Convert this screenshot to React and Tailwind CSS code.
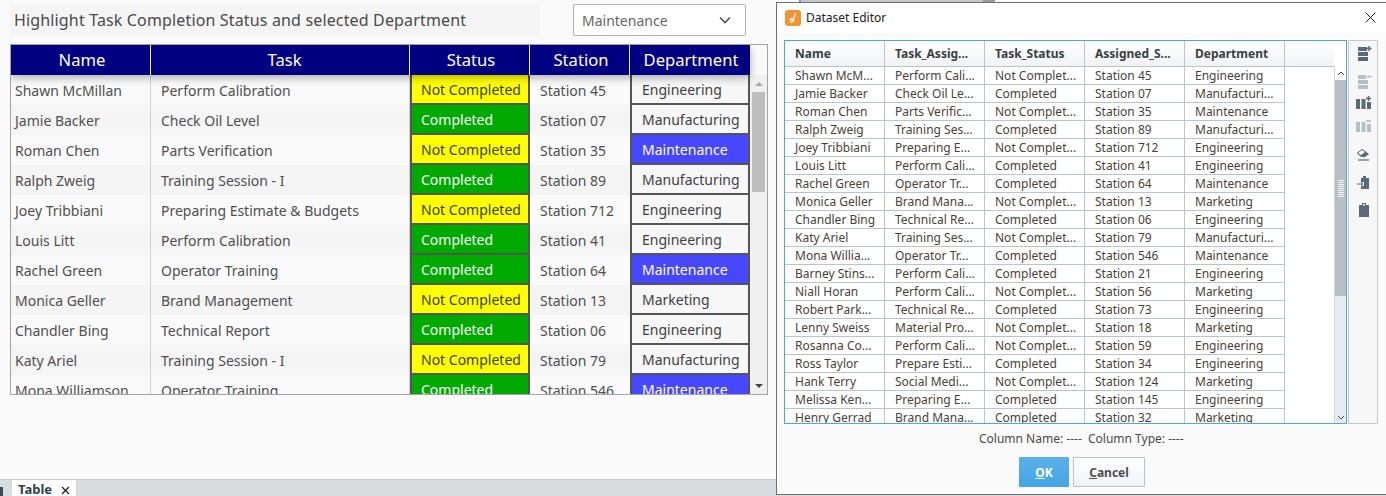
const rows = [
  ["Shawn McMillan","Perform Calibration",0,"Station 45","Engineering"],
  ["Jamie Backer","Check Oil Level",1,"Station 07","Manufacturing"],
  ["Roman Chen","Parts Verification",0,"Station 35","Maintenance"],
  ["Ralph Zweig","Training Session - I",1,"Station 89","Manufacturing"],
  ["Joey Tribbiani","Preparing Estimate & Budgets",0,"Station 712","Engineering"],
  ["Louis Litt","Perform Calibration",1,"Station 41","Engineering"],
  ["Rachel Green","Operator Training",1,"Station 64","Maintenance"],
  ["Monica Geller","Brand Management",0,"Station 13","Marketing"],
  ["Chandler Bing","Technical Report",1,"Station 06","Engineering"],
  ["Katy Ariel","Training Session - I",0,"Station 79","Manufacturing"],
  ["Mona Williamson","Operator Training",1,"Station 546","Maintenance"],
];
const ds = [
  ["Shawn McM...","Perform Cali...","Not Complet...","Station 45","Engineering"],
  ["Jamie Backer","Check Oil Le...","Completed","Station 07","Manufacturi..."],
  ["Roman Chen","Parts Verific...","Not Complet...","Station 35","Maintenance"],
  ["Ralph Zweig","Training Ses...","Completed","Station 89","Manufacturi..."],
  ["Joey Tribbiani","Preparing E...","Not Complet...","Station 712","Engineering"],
  ["Louis Litt","Perform Cali...","Completed","Station 41","Engineering"],
  ["Rachel Green","Operator Tr...","Completed","Station 64","Maintenance"],
  ["Monica Geller","Brand Mana...","Not Complet...","Station 13","Marketing"],
  ["Chandler Bing","Technical Re...","Completed","Station 06","Engineering"],
  ["Katy Ariel","Training Ses...","Not Complet...","Station 79","Manufacturi..."],
  ["Mona Willia...","Operator Tr...","Completed","Station 546","Maintenance"],
  ["Barney Stins...","Perform Cali...","Completed","Station 21","Engineering"],
  ["Niall Horan","Perform Cali...","Not Complet...","Station 56","Marketing"],
  ["Robert Park...","Technical Re...","Completed","Station 73","Engineering"],
  ["Lenny Sweiss","Material Pro...","Not Complet...","Station 18","Marketing"],
  ["Rosanna Co...","Perform Cali...","Not Complet...","Station 59","Engineering"],
  ["Ross Taylor","Prepare Esti...","Completed","Station 34","Engineering"],
  ["Hank Terry","Social Medi...","Not Complet...","Station 124","Marketing"],
  ["Melissa Ken...","Preparing E...","Completed","Station 145","Engineering"],
  ["Henry Gerrad","Brand Mana...","Completed","Station 32","Marketing"],
];
const heads = ["Name","Task_Assig...","Task_Status","Assigned_S...","Department"];

function Tool({ children, className }) {
  return <svg width="16" height="16" viewBox="0 0 16 16" className={`block ml-[2px] shrink-0 ${className}`}>{children}</svg>;
}

function MainTable() {
  return (
    <div className="mx-[10px] mt-2 h-[351px] w-[758px] border border-[#a3a3a3] flex overflow-hidden bg-[#fafafa]">
      <div className="w-[739px] flex flex-col shrink-0">
        <div className="flex h-[30px] shrink-0 bg-[#000080] text-white text-[16.6px] shadow-[0_3px_8px_rgba(0,0,0,0.3)] relative z-10">
          <div className="w-[140px] pl-[3px] flex items-center justify-center border-r border-[#f0f0f0]">Name</div>
          <div className="w-[259px] pl-[9px] flex items-center justify-center border-r border-[#f0f0f0]">Task</div>
          <div className="w-[120px] pl-[3px] flex items-center justify-center border-r border-[#f0f0f0]">Status</div>
          <div className="w-[100px] pl-[3px] flex items-center justify-center border-r border-[#f0f0f0]">Station</div>
          <div className="w-[119px] pl-[3px] flex items-center justify-center">Department</div>
        </div>
        {rows.map((r, i) => (
          <div key={r[0]} className={`flex h-[30px] shrink-0 text-[14px] text-[#4f4f4f] ${i % 2 ? "bg-[#f5f5f5]" : "bg-[#fafafa]"}`}>
            <div className="w-[140px] pl-1 flex items-center border-r border-[#d0d0d0] whitespace-nowrap">{r[0]}</div>
            <div className="w-[259px] pl-[10px] flex items-center border-r border-[#d0d0d0] whitespace-nowrap">{r[1]}</div>
            <div className={`w-[120px] pl-[9px] flex items-center border-x-2 border-b-2 border-[#555555] whitespace-nowrap ${r[2] ? "bg-[#00aa00] text-white" : "bg-[#ffff00] text-[#3b3b00]"}`}>{r[2] ? "Completed" : "Not Completed"}</div>
            <div className="w-[100px] pl-[10px] flex items-center whitespace-nowrap">{r[3]}</div>
            <div className={`w-[120px] pl-[10px] flex items-center border-x-2 border-b-2 border-[#555555] whitespace-nowrap ${r[4] === "Maintenance" ? "bg-[#4747ff] text-white" : "bg-[#f7f7f7] text-[#3f3f3f]"}`}>{r[4]}</div>
          </div>
        ))}
      </div>
      <div className="w-[17px] shrink-0 flex flex-col items-center bg-[#f0f0f0] ml-auto">
        <div className="h-[30px] shrink-0 w-full bg-[#fafafa]"></div>
        <div className="h-[17px] flex items-center justify-center shrink-0">
          <div className="w-0 h-0 border-x-[4px] border-x-transparent border-b-[4px] border-b-[#a8a8a8]"></div>
        </div>
        <div className="h-[100px] w-[13px] shrink-0 bg-[#bdbdbd]"></div>
        <div className="flex-1"></div>
        <div className="h-[17px] flex items-center justify-center shrink-0">
          <div className="w-0 h-0 border-x-[4px] border-x-transparent border-t-[4px] border-t-[#444444]"></div>
        </div>
      </div>
    </div>
  );
}

function Dialog() {
  return (
    <div className="absolute left-[776px] top-[2px] w-[610px] h-[493px] bg-[#fafafa] border border-r-0 border-[#6e6e6e] flex flex-col">
      <div className="h-[30px] bg-white flex items-center pl-[8px] pr-[10px] shrink-0 pb-[1px]">
        <div className="w-4 h-4 rounded-[3px] bg-[#f59331] flex items-center justify-center">
          <svg width="12" height="12" viewBox="0 0 12 12"><path d="M8.5 1 L6.5 7 M3 7.5 L4.5 10.5 L7 8.5 L4.5 6.5 Z" stroke="#fff" strokeWidth="1.2" fill="none" /></svg>
        </div>
        <span className="ml-[5px] text-[12px] text-[#222222]">Dataset Editor</span>
        <svg className="ml-auto" width="11" height="11" viewBox="0 0 11 11"><path d="M0.5 0.5 L10.5 10.5 M10.5 0.5 L0.5 10.5" stroke="#222" strokeWidth="1" /></svg>
      </div>
      <div className="flex ml-[7px] mt-[7px] h-[384px] shrink-0">
        <div className="w-[563px] border border-[#4aa8e6] flex bg-white overflow-hidden">
          <div className="w-[549px] shrink-0 flex flex-col">
            <div className="flex h-[26px] shrink-0 bg-gradient-to-b from-white to-[#f0f3f6] border-b border-[#b9c4cd] text-[12px] font-bold text-[#3a3f44]">
              {heads.map((h) => (
                <div key={h} className="w-[100px] pl-[10px] flex items-center border-r border-[#b9c4cd] whitespace-nowrap">{h}</div>
              ))}
            </div>
            {ds.map((r) => (
              <div key={r[0]} className="flex h-[18px] shrink-0 text-[12px] text-[#4a3f3a]">
                {r.map((c, j) => (
                  <div key={j} className="w-[100px] pl-[10px] flex items-center border-r border-b border-[#b9c4cd] whitespace-nowrap overflow-hidden">{c}</div>
                ))}
              </div>
            ))}
          </div>
          <div className="w-[12px] ml-auto shrink-0 flex flex-col items-center bg-[#e9ecee] mt-[26px] border-l border-[#cfd5da]">
            <div className="h-[13px] w-full bg-white flex items-center justify-center shrink-0">
              <svg width="8" height="5" viewBox="0 0 8 5"><path d="M1 4 L4 1 L7 4" stroke="#444" fill="none" /></svg>
            </div>
            <div className="h-[216px] w-full bg-[#b9bfc4] shrink-0 flex flex-col items-center justify-center">
              <div className="w-[6px] h-[17px] bg-[repeating-linear-gradient(to_bottom,#f5f5f5_0px,#f5f5f5_1px,#b9bfc4_1px,#b9bfc4_2px)]"></div>
            </div>
            <div className="flex-1"></div>
            <div className="h-[12px] flex items-center justify-center shrink-0">
              <svg width="8" height="5" viewBox="0 0 8 5"><path d="M1 1 L4 4 L7 1" stroke="#444" fill="none" /></svg>
            </div>
          </div>
        </div>
        <div className="w-[30px] ml-px h-full border border-[#c5cacf] bg-[#f7f7f7] flex flex-col items-center pt-[5px]">
          <Tool><path d="M2 1h9v4H2zM2 6h10v4H2zM2 11h10v4H2z" fill="#5a6a78" /><path d="M13 0v5M10.5 2.5h5" stroke="#5a6a78" strokeWidth="1.6" /></Tool>
          <Tool className="mt-[12px]"><path d="M2 1h8v4H2zM2 6h10v4H2zM2 11h10v4H2z" fill="#b4bfc8" /><path d="M10.5 2.5h5" stroke="#b4bfc8" strokeWidth="1.6" /></Tool>
          <Tool className="mt-[5px]"><path d="M0 4h4v10H0zM5.5 4h4v10h-4zM11 7h4v7h-4z" fill="#5a6a78" /><path d="M12.5 1v5M10 3.5h5" stroke="#5a6a78" strokeWidth="1.6" /></Tool>
          <Tool className="mt-[7px]"><path d="M0 4h4v10H0zM5.5 4h4v10h-4zM11 6h4v8h-4z" fill="#b4bfc8" /><path d="M10 3h5" stroke="#b4bfc8" strokeWidth="1.6" /></Tool>
          <Tool className="mt-[12px]"><path d="M1 7 L6 3 L13 8 L9 11 H5z" fill="#5a6a78" /><path d="M1.5 7 L6 3.5 L9.5 6 L5 9.5z" fill="#fff" stroke="#5a6a78" strokeWidth="0.9" /><path d="M2 14h11" stroke="#5a6a78" strokeWidth="1.2" /></Tool>
          <Tool className="mt-[11px]"><path d="M5 5h2V3h3v2h3v11H5v-3h3V9H5z" fill="#5a6a78" /><path d="M1 11h6M5 9l2.2 2L5 13" stroke="#5a6a78" strokeWidth="1" fill="none" /></Tool>
          <Tool className="mt-[12px]"><path d="M3 4h3V2h4v2h3v12H3z" fill="#5a6a78" /><path d="M7 3h2v1.5H7z" fill="#f7f7f7" /></Tool>
        </div>
      </div>
      <div className="text-[12px] text-[#4a4a4a] h-[29px] flex items-center pl-[202px] pt-px shrink-0 whitespace-pre">Column Name: ----  Column Type: ----</div>
      <div className="flex pl-[242px] gap-[4px] mt-[4px]">
        <div className="w-[50px] h-[30px] pt-px bg-gradient-to-b from-[#5bb1ea] to-[#45a5e6] rounded-[1px] text-white text-[12px] font-bold flex items-center justify-center"><span><u>O</u>K</span></div>
        <div className="w-[72px] h-[30px] pt-px bg-gradient-to-b from-white to-[#f0f3f6] border border-[#b9c0c6] rounded-[1px] text-[#4a4f54] text-[12px] font-bold flex items-center justify-center"><span><u>C</u>ancel</span></div>
      </div>
    </div>
  );
}

export default function App() {
  return (
    <div className="relative h-[496px] w-[1386px] overflow-hidden bg-[#fafafa] flex flex-col font-['Noto_Sans','Open_Sans',sans-serif]">
      <div className="absolute left-[799px] top-0 h-[2px] w-[196px] flex">
        <div className="w-[2px] bg-[#4aa8e6]"></div>
        <div className="flex-1 bg-[#c8c8c8]"></div>
        <div className="w-[12px] bg-[#9a9a9a]"></div>
      </div>
      <div className="flex items-start pt-1 shrink-0">
        <div className="ml-[10px] w-[530px] h-8 bg-[#f5f5f5] pl-[4px] flex items-center text-[16px] tracking-[0.15px] text-[#4a4a4a] whitespace-nowrap">Highlight Task Completion Status and selected Department</div>
        <div className="ml-[33px] w-[173px] h-8 bg-white border border-[#b0b0b0] rounded-[2px] pl-2 pr-[14px] flex items-center justify-between text-[14px] text-[#666666]">
          <span>Maintenance</span>
          <svg width="12" height="8" viewBox="0 0 12 8"><path d="M1 1.5 L6 6.5 L11 1.5" stroke="#555" strokeWidth="1.7" fill="none" /></svg>
        </div>
      </div>
      <MainTable />
      <div className="mt-auto h-[17px] bg-[#d9dcdf] border-t border-[#c4c8cc] flex shrink-0 overflow-hidden">
        <div className="w-[3px] h-[10px] mt-[7px] bg-[#3a4a58]"></div>
        <div className="ml-[9px] w-[64px] bg-white flex items-start pl-[6px] pt-[3px] text-[13px] font-bold text-[#2f3f4f] gap-[9px] leading-none h-[17px]">
          <span>Table</span>
          <svg className="mt-[3px]" width="9" height="9" viewBox="0 0 9 9"><path d="M1 1 L8 8 M8 1 L1 8" stroke="#222" strokeWidth="1.3" /></svg>
        </div>
      </div>
      <Dialog />
    </div>
  );
}
